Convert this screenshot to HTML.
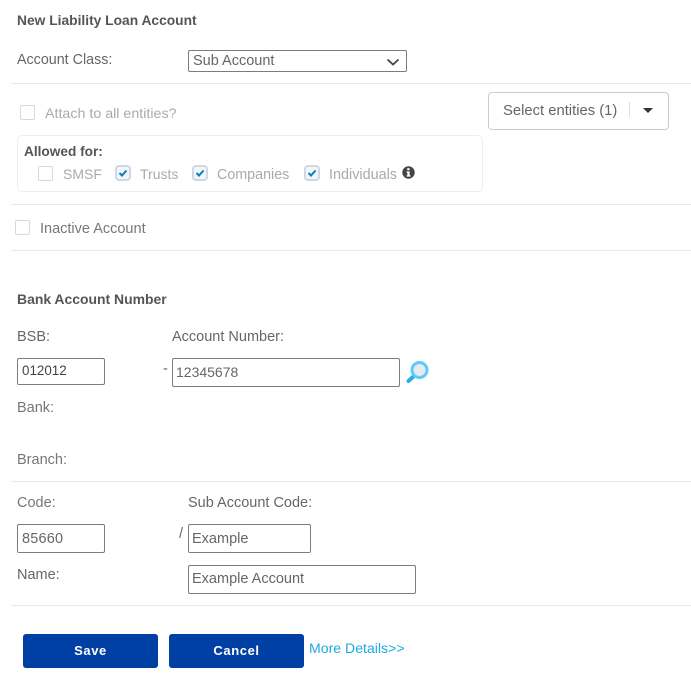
<!DOCTYPE html>
<html><head><meta charset="utf-8"><style>
html,body{margin:0;padding:0;background:#fff}
body{width:691px;height:680px;position:relative;overflow:hidden;font-family:"Liberation Sans",sans-serif;font-size:14.5px;color:#666}
.t{position:absolute;white-space:nowrap;line-height:16px}
.b{font-weight:bold;color:#555;font-size:13.8px}
.g{color:#aaa}
.hr{position:absolute;left:11px;width:680px;height:1px;background:#e9e9e9}
.in{position:absolute;box-sizing:border-box;border:1px solid #7c7c7c;border-radius:2px;background:#fff;padding-left:3px;white-space:nowrap;color:#666}
.cb{position:absolute;box-sizing:border-box;width:15px;height:15px;border:1px solid #d9d9d9;border-radius:2px;background:#fff}
.ck{position:absolute;box-sizing:border-box;width:16px;height:16px;border:2px solid #cdd8e6;border-radius:4px;background:#f3f5f8}
.ck svg{position:absolute;left:1px;top:1px}
.btn{position:absolute;top:634px;height:34px;background:#0040a4;border-radius:3px;color:#fff;font-weight:bold;font-size:13px;letter-spacing:.6px;text-align:center;line-height:33px}
</style></head><body>
<div class="t b" style="left:17px;top:13px">New Liability Loan Account</div>
<div class="t" style="left:17px;top:52px;font-size:14.3px">Account Class:</div>
<div class="in" style="left:188px;top:50px;width:219px;height:22px;line-height:21px;padding-left:4px">Sub Account<svg style="position:absolute;left:197px;top:7px" width="14" height="8" viewBox="0 0 14 8"><path d="M1.5 1.5L7 6.5L12.5 1.5" fill="none" stroke="#444" stroke-width="1.8"/></svg></div>
<div class="hr" style="top:83px"></div>
<div class="cb" style="left:20px;top:105px"></div>
<div class="t g" style="left:45px;top:106px;font-size:14.25px">Attach to all entities?</div>
<div style="position:absolute;left:488px;top:92px;width:181px;height:38px;box-sizing:border-box;border:1px solid #ccc;border-radius:4px"></div>
<div class="t" style="left:503px;top:103px;color:#666;font-size:14.8px">Select entities (1)</div>
<div style="position:absolute;left:629px;top:102px;width:1px;height:15px;background:#ddd"></div>
<div style="position:absolute;left:643px;top:108px;width:0;height:0;border-left:5px solid transparent;border-right:5px solid transparent;border-top:5px solid #333"></div>
<div style="position:absolute;left:17px;top:135px;width:466px;height:57px;box-sizing:border-box;border:1px solid #eee;border-radius:5px"></div>
<div class="t b" style="left:24px;top:144px;font-size:13.65px">Allowed for:</div>
<div class="cb" style="left:38px;top:166px"></div>
<div class="t g" style="left:63px;top:166px;font-size:14px">SMSF</div>
<div class="ck" style="left:115px;top:165px"><svg width="10" height="10" viewBox="0 0 10 10"><path d="M1.5 5L4 7.5L8.5 2.5" fill="none" stroke="#0d7cc4" stroke-width="2"/></svg></div>
<div class="t g" style="left:140px;top:166px;font-size:14px">Trusts</div>
<div class="ck" style="left:192px;top:165px"><svg width="10" height="10" viewBox="0 0 10 10"><path d="M1.5 5L4 7.5L8.5 2.5" fill="none" stroke="#0d7cc4" stroke-width="2"/></svg></div>
<div class="t g" style="left:217px;top:167px;font-size:14.3px">Companies</div>
<div class="ck" style="left:304px;top:165px"><svg width="10" height="10" viewBox="0 0 10 10"><path d="M1.5 5L4 7.5L8.5 2.5" fill="none" stroke="#0d7cc4" stroke-width="2"/></svg></div>
<div class="t g" style="left:329px;top:167px;font-size:14.4px">Individuals</div>
<svg style="position:absolute;left:402px;top:166px" width="13" height="13" viewBox="0 0 13 13"><circle cx="6.5" cy="6.5" r="6.2" fill="#444"/><rect x="5.2" y="2.2" width="2.4" height="2" fill="#fff"/><path d="M4.6 5.4H7.6V9.4H8.5V10.6H4.6V9.4H5.4V6.6H4.6Z" fill="#fff"/></svg>
<div class="hr" style="top:204px"></div>
<div class="cb" style="left:15px;top:220px"></div>
<div class="t" style="left:40px;top:221px;color:#777">Inactive Account</div>
<div class="hr" style="top:250px"></div>
<div class="t b" style="left:17px;top:291px;font-size:13.95px">Bank Account Number</div>
<div class="t" style="left:17px;top:329px">BSB:</div>
<div class="t" style="left:172px;top:329px">Account Number:</div>
<div class="in" style="left:17px;top:358px;width:88px;height:27px;line-height:24px;color:#444;font-size:13.4px;padding-left:4px">012012</div>
<div class="t" style="left:163px;top:361px">-</div>
<div class="in" style="left:172px;top:358px;width:228px;height:29px;line-height:27px;font-size:14px">12345678</div>
<svg style="position:absolute;left:405px;top:360px" width="25" height="25" viewBox="0 0 25 25"><path d="M9.5 15.5L3.5 21" stroke="#27aee8" stroke-width="4" stroke-linecap="round"/><circle cx="14.5" cy="10" r="7.5" fill="#e6ebf0" stroke="#5bcbf7" stroke-width="3"/></svg>
<div class="t" style="left:17px;top:400px;color:#777">Bank:</div>
<div class="t" style="left:17px;top:452px;color:#777">Branch:</div>
<div class="hr" style="top:481px"></div>
<div class="t" style="left:17px;top:495px;color:#777">Code:</div>
<div class="t" style="left:188px;top:495px">Sub Account Code:</div>
<div class="in" style="left:17px;top:524px;width:88px;height:29px;line-height:29px;padding-left:4px;letter-spacing:.2px">85660</div>
<div class="t" style="left:179px;top:526px">/</div>
<div class="in" style="left:188px;top:524px;width:123px;height:29px;line-height:29px">Example</div>
<div class="t" style="left:17px;top:567px">Name:</div>
<div class="in" style="left:188px;top:565px;width:228px;height:29px;line-height:27px">Example Account</div>
<div class="hr" style="top:605px"></div>
<div class="btn" style="left:23px;width:135px">Save</div>
<div class="btn" style="left:169px;width:135px">Cancel</div>
<div class="t" style="left:309px;top:640px;color:#1fa9e1;font-size:14.1px">More Details&gt;&gt;</div>
</body></html>
